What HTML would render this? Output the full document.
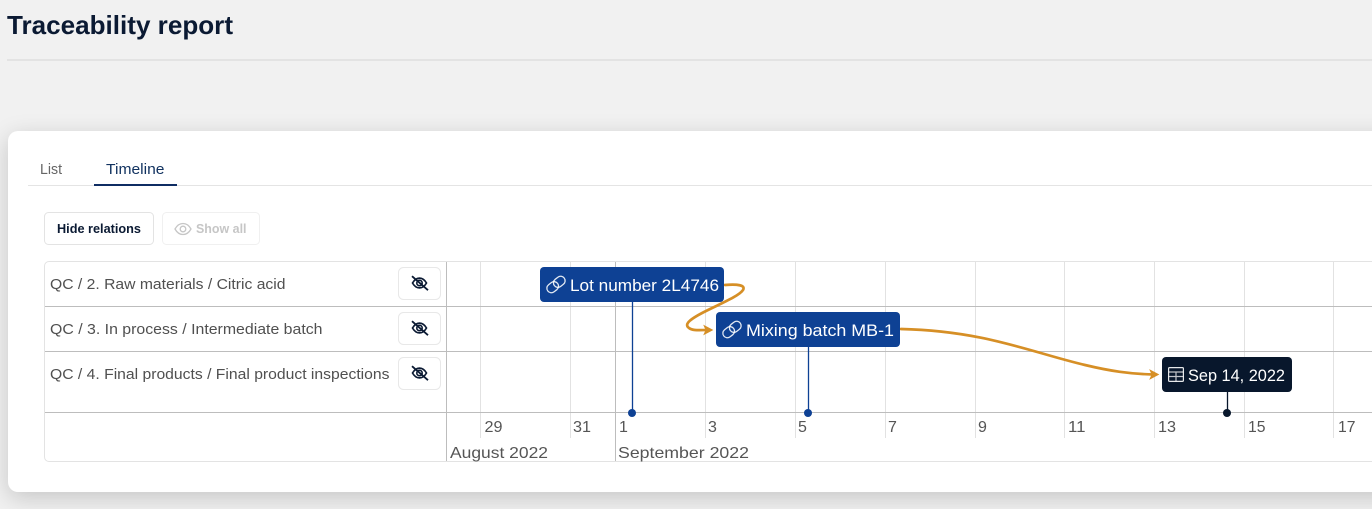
<!DOCTYPE html>
<html>
<head>
<meta charset="utf-8">
<style>
html,body{margin:0;padding:0;width:1372px;height:509px;overflow:hidden;background:#f1f1f1;}
#card{position:absolute;left:8px;top:131px;width:1500px;height:361px;background:#fff;border-radius:10px;box-shadow:0 6px 24px rgba(0,0,0,.18);}
svg{position:absolute;left:0;top:0;}
text{font-family:"Liberation Sans",sans-serif;}
</style>
</head>
<body>
<div id="card"></div>
<svg width="1372" height="509" viewBox="0 0 1372 509" xmlns="http://www.w3.org/2000/svg">
<defs>
<g id="eyeoff" fill="none" stroke="#0b1a33">
<path stroke-width="1.700" d="M-7 0C-4.900-3.700-2.400-4.900 0-4.900S4.900-3.700 7 0C4.900 3.700 2.400 4.900 0 4.900S-4.900 3.700-7 0Z"/>
<circle r="2.700" stroke-width="1.600"/>
<path stroke-width="1.800" d="M-7.500-6.800L8.500 7.200"/>
</g>
<g id="link" fill="none" stroke="#fff" stroke-opacity=".88" stroke-width="1.300">
<rect x="-6.200" y="-4.500" width="12.400" height="9" rx="4.500" transform="translate(-3.300 2.700) rotate(-38)"/>
<rect x="-6.200" y="-4.500" width="12.400" height="9" rx="4.500" transform="translate(3.300 -2.700) rotate(-38)"/>
</g>
</defs>

<!-- header -->
<text x="7" y="34" font-size="26" font-weight="700" fill="#0b1a33" textLength="226" lengthAdjust="spacingAndGlyphs">Traceability report</text>
<rect x="7" y="59" width="1365" height="2" fill="#e3e3e3"/>

<!-- tabs -->
<text x="40" y="174" font-size="15" fill="#666" textLength="22" lengthAdjust="spacingAndGlyphs">List</text>
<text x="106" y="174" font-size="15" fill="#10315f" textLength="58.500" lengthAdjust="spacingAndGlyphs">Timeline</text>
<rect x="28" y="185" width="1344" height="1" fill="#e4e4e4"/>
<rect x="94" y="184" width="83" height="2" fill="#0f2d63"/>

<!-- buttons -->
<rect x="44.500" y="212.500" width="109" height="32" rx="4" fill="#fff" stroke="#e3e3e3"/>
<text x="57" y="233" font-size="12.500" font-weight="700" fill="#0b1a33" textLength="84" lengthAdjust="spacingAndGlyphs">Hide relations</text>
<rect x="162.500" y="212.500" width="97" height="32" rx="4" fill="#fff" stroke="#f0f0f0"/>
<g fill="none" stroke="#c6c6c6" stroke-width="1.300" transform="translate(183 229)">
<path d="M-8 0C-5.500-4.500-2.800-5.500 0-5.500S5.500-4.500 8 0C5.500 4.500 2.800 5.500 0 5.500S-5.500 4.500-8 0Z"/>
<circle r="2.800"/>
</g>
<text x="196" y="233" font-size="12.500" font-weight="700" fill="#c6c6c6" textLength="50.500" lengthAdjust="spacingAndGlyphs">Show all</text>

<!-- table frame -->
<path d="M1372 261.500H49a4.500 4.500 0 0 0-4.500 4.500V457a4.500 4.500 0 0 0 4.500 4.500H1372" fill="none" stroke="#e3e3e3"/>

<!-- light grid -->
<g stroke="#e2e2e2" fill="none">
<path d="M480.500 262V438M570.500 262V438M705.500 262V438M795.500 262V438M885.500 262V438M975.500 262V438M1064.500 262V438M1154.500 262V438M1244.500 262V438M1333.500 262V438"/>
</g>
<!-- dark grid -->
<g stroke="#bdbdbd" fill="none">
<path d="M45 306.500H1372M45 351.500H1372M45 412.500H1372"/>
<path d="M446.500 262V461M615.500 262V461"/>
</g>

<!-- row labels -->
<g font-size="15" fill="#505050">
<text x="50" y="289" textLength="235.500" lengthAdjust="spacingAndGlyphs">QC / 2. Raw materials / Citric acid</text>
<text x="50" y="334" textLength="272.500" lengthAdjust="spacingAndGlyphs">QC / 3. In process / Intermediate batch</text>
<text x="50" y="379" textLength="339.500" lengthAdjust="spacingAndGlyphs">QC / 4. Final products / Final product inspections</text>
</g>

<!-- eye buttons -->
<g fill="#fff" stroke="#e8e8e8">
<rect x="398.500" y="267.500" width="42" height="32" rx="5"/>
<rect x="398.500" y="312.500" width="42" height="32" rx="5"/>
<rect x="398.500" y="357.500" width="42" height="32" rx="5"/>
</g>
<use href="#eyeoff" x="419.500" y="283"/>
<use href="#eyeoff" x="419.500" y="328"/>
<use href="#eyeoff" x="419.500" y="373"/>

<!-- axis labels -->
<g font-size="16" fill="#555">
<text x="484.500" y="432" textLength="18" lengthAdjust="spacingAndGlyphs">29</text>
<text x="573" y="432" textLength="18" lengthAdjust="spacingAndGlyphs">31</text>
<text x="619" y="432">1</text>
<text x="708" y="432">3</text>
<text x="798" y="432">5</text>
<text x="888" y="432">7</text>
<text x="978" y="432">9</text>
<text x="1068" y="432" textLength="17.500" lengthAdjust="spacingAndGlyphs">11</text>
<text x="1158" y="432" textLength="18" lengthAdjust="spacingAndGlyphs">13</text>
<text x="1248" y="432" textLength="17.500" lengthAdjust="spacingAndGlyphs">15</text>
<text x="1338" y="432" textLength="17.500" lengthAdjust="spacingAndGlyphs">17</text>
<text x="450" y="458" textLength="98" lengthAdjust="spacingAndGlyphs">August 2022</text>
<text x="618" y="458" textLength="131" lengthAdjust="spacingAndGlyphs">September 2022</text>
</g>

<!-- stems -->
<path d="M632.500 302V412" stroke="#0e4194" stroke-width="1.300"/>
<circle cx="632" cy="413" r="4" fill="#0e4194"/>
<path d="M808.500 347V412" stroke="#0e4194" stroke-width="1.300"/>
<circle cx="808" cy="413" r="4" fill="#0e4194"/>
<path d="M1227.500 392V412" stroke="#08172c" stroke-width="1.300"/>
<circle cx="1227" cy="413" r="4" fill="#08172c"/>

<!-- relations -->
<g fill="none" stroke="#d68f26" stroke-width="2.700" stroke-linecap="round">
<path d="M725 285C737 284 746 285 743 290C739 296 722 303 706 311C692 318 683 324 689 328C693 331 700 330 708 330"/>
<path d="M901 329C985 331 1030 352 1085 365C1110 371 1130 374 1154 374.500"/>
</g>
<path d="M712.500 330L704 325.500L706 330L704 334.500Z" fill="#d68f26" stroke="#d68f26" stroke-width=".8"/>
<path d="M1158.500 374.500L1150 370L1152 374.500L1150 379Z" fill="#d68f26" stroke="#d68f26" stroke-width=".8"/>

<!-- pills -->
<rect x="540" y="267" width="184" height="35" rx="4" fill="#0e4194"/>
<use href="#link" x="556" y="284.500"/>
<text x="570" y="291" font-size="17" fill="#fff" textLength="149" lengthAdjust="spacingAndGlyphs">Lot number 2L4746</text>

<rect x="716" y="312" width="184" height="35" rx="4" fill="#0e4194"/>
<use href="#link" x="732" y="329.500"/>
<text x="746" y="336" font-size="17" fill="#fff" textLength="148" lengthAdjust="spacingAndGlyphs">Mixing batch MB-1</text>

<rect x="1162" y="357" width="130" height="35" rx="4" fill="#08172c"/>
<g fill="none" stroke="#fff" stroke-opacity=".9" stroke-width="1.200">
<rect x="1168.600" y="367.600" width="14.800" height="13.800" rx="1"/>
<path d="M1168.600 372H1183.400M1168.600 376.500H1183.400M1176 372V381.400" stroke-opacity=".75"/>
</g>
<text x="1188" y="381" font-size="16.500" fill="#fff" textLength="97" lengthAdjust="spacingAndGlyphs">Sep 14, 2022</text>
</svg>
</body>
</html>
